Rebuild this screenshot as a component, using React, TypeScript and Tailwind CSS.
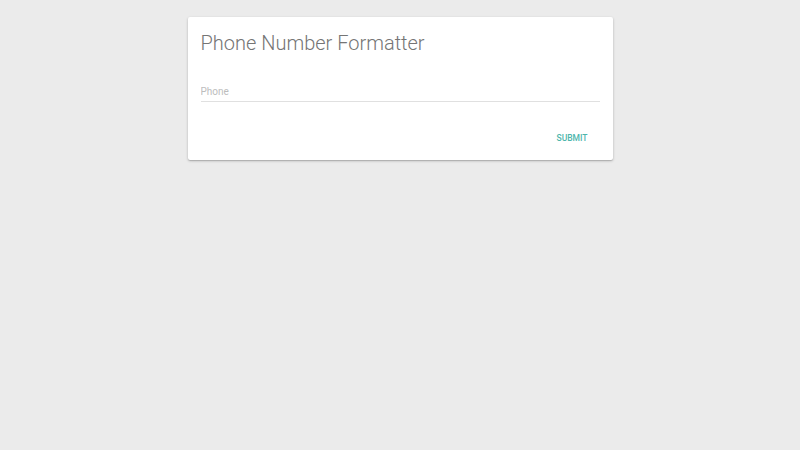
import React from 'react';

export default function App() {
  return (
    <div className="min-h-[450px] w-full bg-[#ebebeb] pt-[17px] font-['Roboto',sans-serif]">
      <div className="mx-auto w-[425px] h-[143px] bg-white shadow-[0_1px_3px_rgba(0,0,0,0.2),0_1px_1px_rgba(0,0,0,0.14)] rounded-[2px] flex flex-col px-[13px]">
        <h1 className="pt-[12px] text-[20px] leading-[28px] font-light text-[#757575]">Phone Number Formatter</h1>
        <div className="mt-[15px]">
          <input
            type="text"
            placeholder="Phone"
            className="w-full h-[30px] border-b border-[#e0e0e0] text-[10px] text-[#616161] placeholder:text-[#bdbdbd] outline-none pt-[10px]"
          />
        </div>
        <div className="flex justify-end mt-[30px] pr-[12px]">
          <button className="text-[8.5px] font-medium text-[#4db6ac] uppercase">Submit</button>
        </div>
      </div>
    </div>
  );
}
